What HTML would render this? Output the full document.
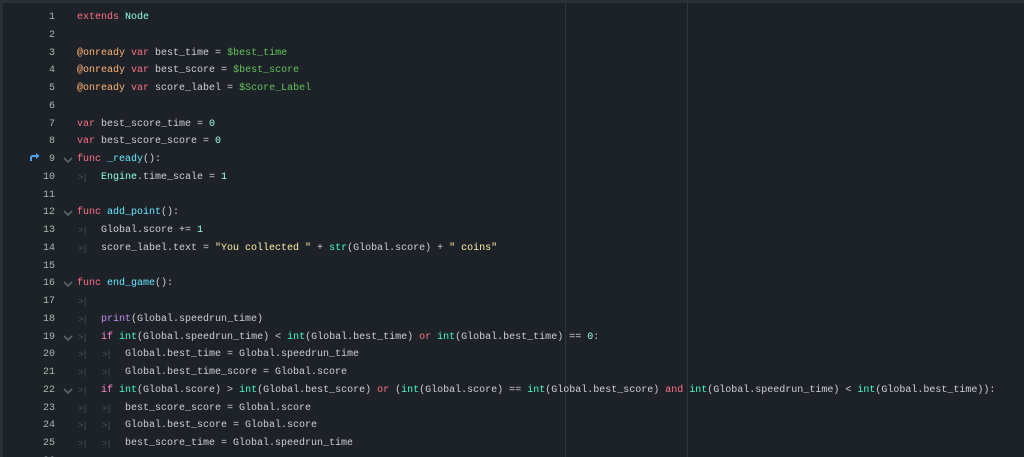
<!DOCTYPE html>
<html><head><style>
html,body{margin:0;padding:0;overflow:hidden;}
body{width:1024px;height:457px;overflow:hidden;background:#1d2229;position:relative;font-family:"Liberation Mono","DejaVu Sans Mono",monospace;font-size:10px;}
.frame{position:absolute;left:0;top:0;width:1024px;height:457px;border-left:3px solid #2a2f38;border-top:3px solid #2a2f38;box-sizing:border-box;}
.guide{position:absolute;top:3px;height:454px;width:1px;background:#2e343d;}
.code{position:absolute;left:0;top:9px;width:1024px;}
.l{position:relative;height:17.75px;line-height:18px;white-space:pre;color:#cdcfd2;}
.n{position:absolute;left:20px;width:35px;text-align:right;color:#a9b8ad;}
.c{position:absolute;left:77px;top:0;}
.c1{left:101px}.c2{left:125px}
.f{position:absolute;left:63px;top:6px;width:10px;height:6px;}
.t{position:absolute;top:0;color:#4d535c;font-size:9px;letter-spacing:-1px;}
.t1{left:78px}.t2{left:102px}
.k{color:#ff7085}.cf{color:#ff8ccc}.a{color:#ffb373}.np{color:#63c259}
.num{color:#a1ffe0}.s{color:#ffeda1}.fn{color:#66e6ff}.bi{color:#42ffc2}.pr{color:#c38ef1}.cl{color:#8effda}
</style></head><body>
<div class="frame"></div>
<div class="guide" style="left:565px"></div>
<div class="guide" style="left:687px"></div>
<svg style="position:absolute;left:30px;top:153px" width="10" height="9" viewBox="0 0 10 9"><path d="M1 8 V5 Q1 3 3 3 H7" stroke="#4ea3f0" stroke-width="2" fill="none"/><path d="M6 0 L9.5 3 L6 6 Z" fill="#4ea3f0"/></svg>
<div class="code">
<div class="l"><span class="n">1</span><span class="c"><span class="k">extends</span> <span class="cl">Node</span></span></div>
<div class="l"><span class="n">2</span></div>
<div class="l"><span class="n">3</span><span class="c"><span class="a">@onready</span> <span class="k">var</span> best_time = <span class="np">$best_time</span></span></div>
<div class="l"><span class="n">4</span><span class="c"><span class="a">@onready</span> <span class="k">var</span> best_score = <span class="np">$best_score</span></span></div>
<div class="l"><span class="n">5</span><span class="c"><span class="a">@onready</span> <span class="k">var</span> score_label = <span class="np">$Score_Label</span></span></div>
<div class="l"><span class="n">6</span></div>
<div class="l"><span class="n">7</span><span class="c"><span class="k">var</span> best_score_time = <span class="num">0</span></span></div>
<div class="l"><span class="n">8</span><span class="c"><span class="k">var</span> best_score_score = <span class="num">0</span></span></div>
<div class="l"><span class="n">9</span><svg class="f" viewBox="0 0 10 6"><path d="M1 1 L5 5 L9 1" stroke="#5d636c" stroke-width="1.6" fill="none"/></svg><span class="c"><span class="k">func</span> <span class="fn">_ready</span>():</span></div>
<div class="l"><span class="n">10</span><span class="t t1">&gt;|</span><span class="c c1"><span class="cl">Engine</span>.time_scale = <span class="num">1</span></span></div>
<div class="l"><span class="n">11</span></div>
<div class="l"><span class="n">12</span><svg class="f" viewBox="0 0 10 6"><path d="M1 1 L5 5 L9 1" stroke="#5d636c" stroke-width="1.6" fill="none"/></svg><span class="c"><span class="k">func</span> <span class="fn">add_point</span>():</span></div>
<div class="l"><span class="n">13</span><span class="t t1">&gt;|</span><span class="c c1">Global.score += <span class="num">1</span></span></div>
<div class="l"><span class="n">14</span><span class="t t1">&gt;|</span><span class="c c1">score_label.text = <span class="s">"You collected "</span> + <span class="bi">str</span>(Global.score) + <span class="s">" coins"</span></span></div>
<div class="l"><span class="n">15</span></div>
<div class="l"><span class="n">16</span><svg class="f" viewBox="0 0 10 6"><path d="M1 1 L5 5 L9 1" stroke="#5d636c" stroke-width="1.6" fill="none"/></svg><span class="c"><span class="k">func</span> <span class="fn">end_game</span>():</span></div>
<div class="l"><span class="n">17</span><span class="t t1">&gt;|</span></div>
<div class="l"><span class="n">18</span><span class="t t1">&gt;|</span><span class="c c1"><span class="pr">print</span>(Global.speedrun_time)</span></div>
<div class="l"><span class="n">19</span><svg class="f" viewBox="0 0 10 6"><path d="M1 1 L5 5 L9 1" stroke="#5d636c" stroke-width="1.6" fill="none"/></svg><span class="t t1">&gt;|</span><span class="c c1"><span class="cf">if</span> <span class="bi">int</span>(Global.speedrun_time) &lt; <span class="bi">int</span>(Global.best_time) <span class="k">or</span> <span class="bi">int</span>(Global.best_time) == <span class="num">0</span>:</span></div>
<div class="l"><span class="n">20</span><span class="t t1">&gt;|</span><span class="t t2">&gt;|</span><span class="c c2">Global.best_time = Global.speedrun_time</span></div>
<div class="l"><span class="n">21</span><span class="t t1">&gt;|</span><span class="t t2">&gt;|</span><span class="c c2">Global.best_time_score = Global.score</span></div>
<div class="l"><span class="n">22</span><svg class="f" viewBox="0 0 10 6"><path d="M1 1 L5 5 L9 1" stroke="#5d636c" stroke-width="1.6" fill="none"/></svg><span class="t t1">&gt;|</span><span class="c c1"><span class="cf">if</span> <span class="bi">int</span>(Global.score) &gt; <span class="bi">int</span>(Global.best_score) <span class="k">or</span> (<span class="bi">int</span>(Global.score) == <span class="bi">int</span>(Global.best_score) <span class="k">and</span> <span class="bi">int</span>(Global.speedrun_time) &lt; <span class="bi">int</span>(Global.best_time)):</span></div>
<div class="l"><span class="n">23</span><span class="t t1">&gt;|</span><span class="t t2">&gt;|</span><span class="c c2">best_score_score = Global.score</span></div>
<div class="l"><span class="n">24</span><span class="t t1">&gt;|</span><span class="t t2">&gt;|</span><span class="c c2">Global.best_score = Global.score</span></div>
<div class="l"><span class="n">25</span><span class="t t1">&gt;|</span><span class="t t2">&gt;|</span><span class="c c2">best_score_time = Global.speedrun_time</span></div>
<div class="l"><span class="n">26</span></div>
</div>
</body></html>
